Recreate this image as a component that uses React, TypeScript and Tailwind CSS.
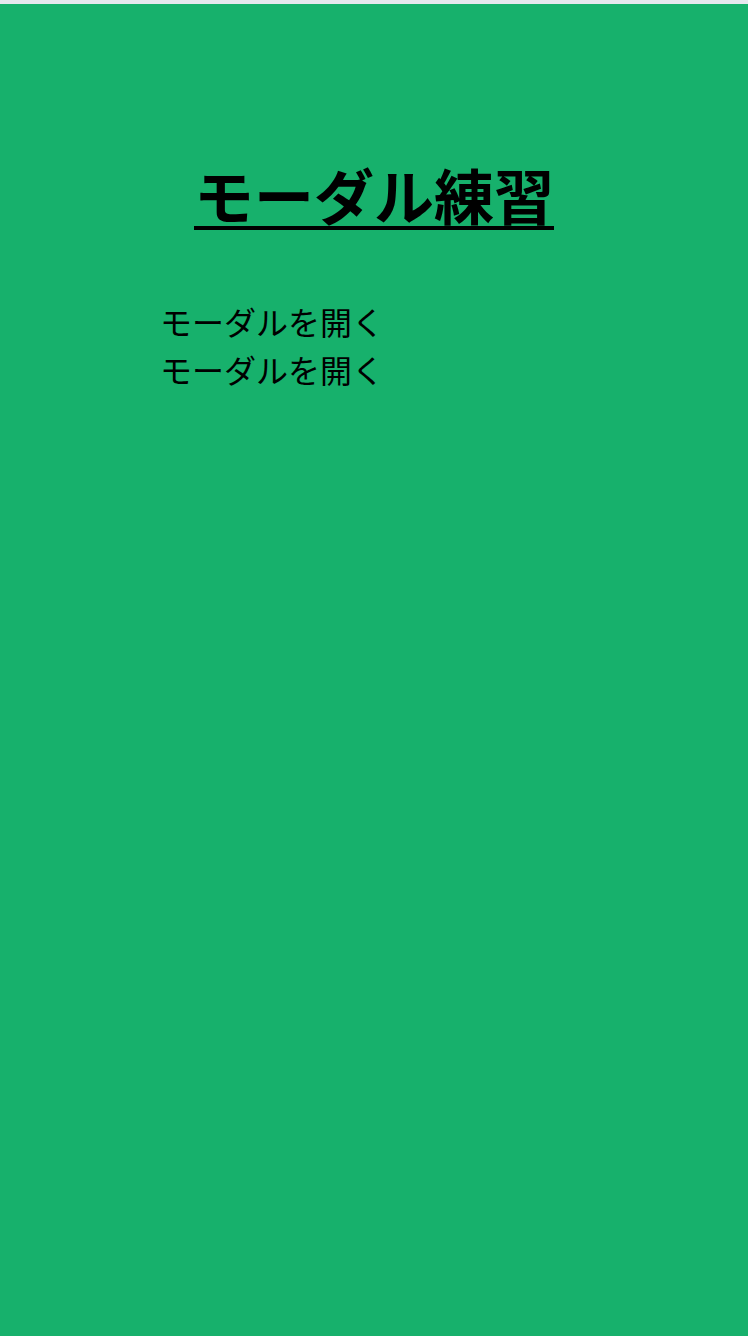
export default function App() {
  const buttons = ["モーダルを開く", "モーダルを開く"];

  return (
    <div
      className="min-h-[1336px] bg-[#17b16c] flex flex-col"
      style={{ fontFamily: '"Noto Sans CJK JP", "Noto Sans", sans-serif' }}
    >
      <div className="h-1 bg-[#e6e8ee]" />
      <h1 className="mt-[160px] text-center text-[60px] leading-none font-bold text-black underline underline-offset-[6px] decoration-[4px]">
        モーダル練習
      </h1>
      <div className="mt-[78px] pl-[160px] flex flex-col items-start gap-[10px]">
        {buttons.map((label, i) => (
          <button key={i} className="text-[32px] leading-[38px] text-black">
            {label}
          </button>
        ))}
      </div>
    </div>
  );
}
